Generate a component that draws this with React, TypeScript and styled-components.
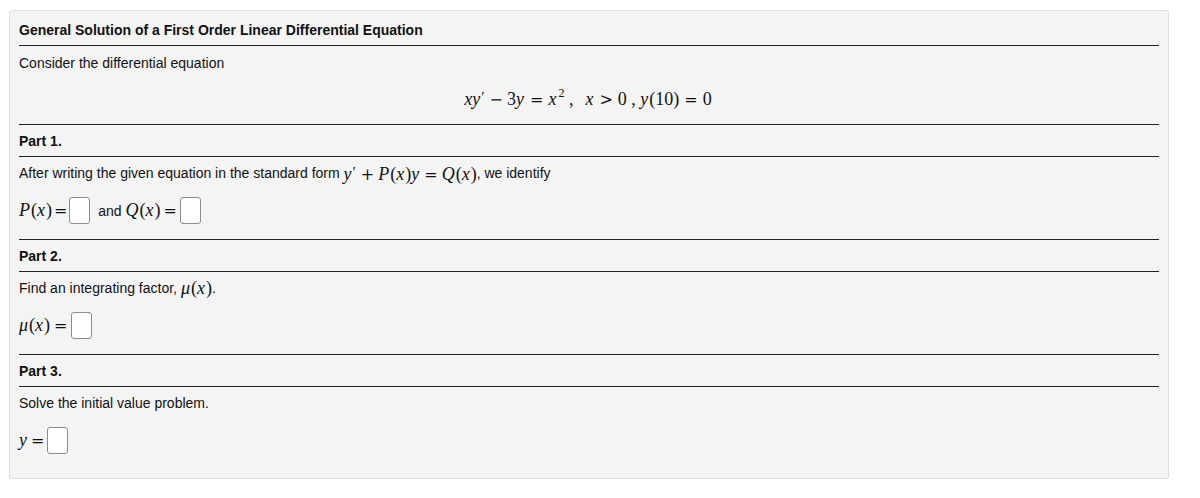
import React, {FC, ReactNode} from 'react'
import styled, {createGlobalStyle} from 'styled-components'

const GlobalStyle = createGlobalStyle`
    html, body {
        margin: 0;
        padding: 0;
        background: #fff;
    }
    body {
        font-family: "Liberation Sans", Arial, sans-serif;
        color: #111;
    }
`;

const Panel = styled.div`
    box-sizing: border-box;
    width: 1160px;
    margin: 10px 0 0 9px;
    padding: 0 9px 24px;
    background: #f4f4f4;
    border: 1px solid #dedede;
    border-radius: 3px;
`;

const Title = styled.div`
    font-size: 14px;
    font-weight: bold;
    line-height: 15px;
    padding: 12px 0 7px;
    border-bottom: 1px solid #222;
`;

const PartHeading = styled.div`
    font-size: 14px;
    font-weight: bold;
    line-height: 15px;
    padding: 9px 0 7px;
    border-top: 1px solid #222;
    border-bottom: 1px solid #222;
`;

const Section = styled.div<{$top?: number; $bottom?: number}>`
    padding-top: ${p => p.$top ?? 7}px;
    padding-bottom: ${p => p.$bottom ?? 15}px;
`;

const Text = styled.div`
    font-size: 14px;
    line-height: 18px;
    height: 18px;
    display: flex;
    align-items: center;
    white-space: pre;
`;

const Display = styled.div`
    display: flex;
    justify-content: center;
    align-items: center;
    height: 20px;
    margin-top: 16px;
    padding-right: 2px;
`;

const AnswerRow = styled.div`
    display: flex;
    align-items: center;
    height: 27px;
    margin-top: 15px;
    font-size: 14px;
    white-space: pre;
`;

const MathSpan = styled.span`
    font-family: "Liberation Serif", "Times New Roman", serif;
    font-size: 18px;
    line-height: 20px;
    white-space: pre;
`;

const Mi = styled.span`
    font-style: italic;
    padding-right: 1px;
`;

const Mo = styled.span<{$pad?: number}>`
    font-family: "DejaVu Serif", serif;
    font-size: 16px;
    padding: 0 ${p => p.$pad ?? 4}px;
`;

const Prime = styled.span`
    font-size: 15px;
    vertical-align: 3px;
    padding-right: 1px;
`;

const Sup = styled.sup`
    font-size: 12px;
    line-height: 0;
    vertical-align: 8px;
    padding-left: 1px;
`;

const Gap = styled.span<{$w: number}>`
    display: inline-block;
    width: ${p => p.$w}px;
`;

const AnswerBox = styled.span`
    display: inline-block;
    box-sizing: border-box;
    width: 21px;
    height: 27px;
    background: #fff;
    border: 1px solid #8c8c8c;
    border-radius: 3px;
`;

const M: FC<{children: ReactNode}> = ({children}) => <MathSpan>{children}</MathSpan>

export default function App() {
    return (
        <>
            <GlobalStyle />
            <Panel>
                <Title>General Solution of a First Order Linear Differential Equation</Title>
                <Section $top={8} $bottom={16}>
                    <Text>Consider the differential equation</Text>
                    <Display>
                        <M>
                            <Mi>xy</Mi><Prime>′</Prime><Mo>−</Mo>3<Mi>y</Mi><Mo $pad={5}>=</Mo><Mi>x</Mi><Sup>2</Sup> ,
                            <Gap $w={12} />
                            <Mi>x</Mi><Mo $pad={5}>&gt;</Mo>0 , <Mi>y</Mi>(10)<Mo $pad={5}>=</Mo>0
                        </M>
                    </Display>
                </Section>

                <PartHeading>Part 1.</PartHeading>
                <Section>
                    <Text>
                        After writing the given equation in the standard form{' '}
                        <M>
                            <Mi>y</Mi><Prime>′</Prime><Mo>+</Mo><Mi>P</Mi>(<Mi>x</Mi>)<Mi>y</Mi><Mo $pad={4}>=</Mo><Mi>Q</Mi>(<Mi>x</Mi>)
                        </M>
                        , we identify
                    </Text>
                    <AnswerRow>
                        <M><Mi>P</Mi>(<Mi>x</Mi>)<Mo $pad={2}>=</Mo></M>
                        <AnswerBox />
                        {'  and '}
                        <M><Mi>Q</Mi>(<Mi>x</Mi>)<Mo $pad={3}>=</Mo></M>
                        <AnswerBox />
                    </AnswerRow>
                </Section>

                <PartHeading>Part 2.</PartHeading>
                <Section>
                    <Text>
                        Find an integrating factor, <M><Mi>μ</Mi>(<Mi>x</Mi>)</M>.
                    </Text>
                    <AnswerRow>
                        <M><Mi>μ</Mi>(<Mi>x</Mi>)<Mo $pad={4}>=</Mo></M>
                        <AnswerBox />
                    </AnswerRow>
                </Section>

                <PartHeading>Part 3.</PartHeading>
                <Section $bottom={0}>
                    <Text>Solve the initial value problem.</Text>
                    <AnswerRow>
                        <M><Mi>y</Mi><Mo $pad={3}>=</Mo></M>
                        <AnswerBox />
                    </AnswerRow>
                </Section>
            </Panel>
        </>
    )
}
